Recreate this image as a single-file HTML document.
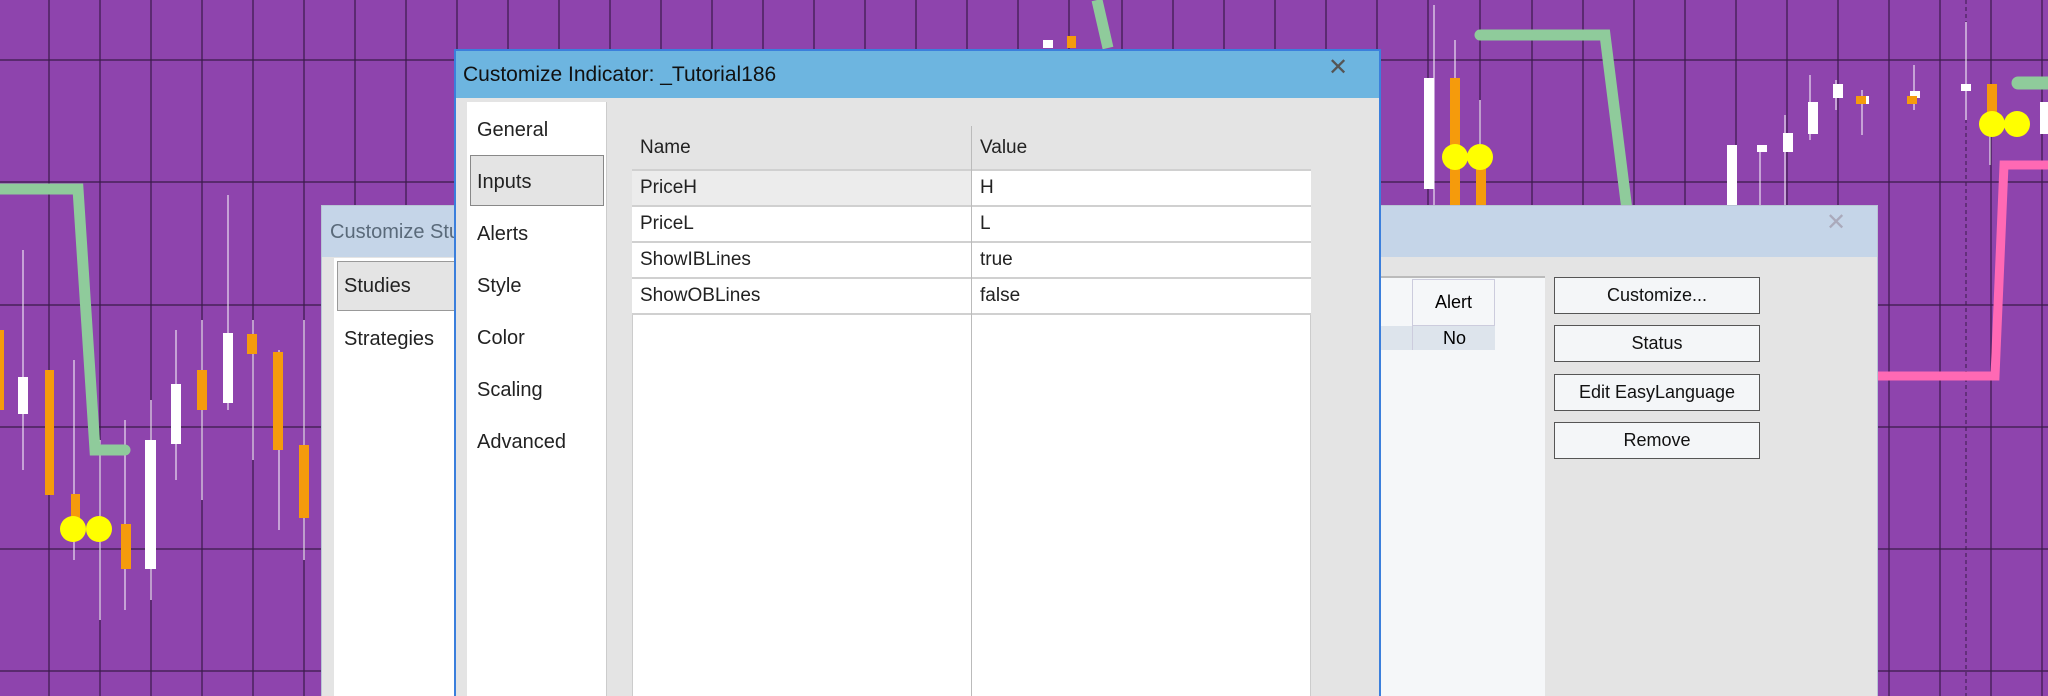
<!DOCTYPE html>
<html style="overflow:hidden;height:696px"><head><meta charset="utf-8"><style>
html,body{margin:0;padding:0}
#w{width:2048px;height:696px;overflow:hidden;background:#8e44ad;font-family:"Liberation Sans",sans-serif;position:relative}
.abs{position:absolute}
.t{font-size:20px;color:#222;position:absolute}
.btn{position:absolute;left:1554px;width:206px;height:37px;border:1px solid #555;background:#f4f6f8;box-sizing:border-box;text-align:center;line-height:35px;font-size:18px;color:#111}
.row{position:absolute;left:632px;width:679px;height:36px;border-bottom:2px solid #d0d0d0;box-sizing:border-box;font-size:19px;line-height:34px;color:#222}
.row span{position:absolute}
</style></head><body><div id="w">
<svg class="abs" style="left:0;top:0" width="2048" height="696">
<g stroke="#3a1a4a" stroke-width="1.2">
<line x1="49" y1="0" x2="49" y2="696"/><line x1="100" y1="0" x2="100" y2="696"/><line x1="151" y1="0" x2="151" y2="696"/><line x1="202" y1="0" x2="202" y2="696"/><line x1="253" y1="0" x2="253" y2="696"/><line x1="304" y1="0" x2="304" y2="696"/><line x1="355" y1="0" x2="355" y2="696"/><line x1="406" y1="0" x2="406" y2="696"/><line x1="457" y1="0" x2="457" y2="696"/><line x1="508" y1="0" x2="508" y2="696"/><line x1="559" y1="0" x2="559" y2="696"/><line x1="610" y1="0" x2="610" y2="696"/><line x1="661" y1="0" x2="661" y2="696"/><line x1="712" y1="0" x2="712" y2="696"/><line x1="763" y1="0" x2="763" y2="696"/><line x1="814" y1="0" x2="814" y2="696"/><line x1="865" y1="0" x2="865" y2="696"/><line x1="916" y1="0" x2="916" y2="696"/><line x1="967" y1="0" x2="967" y2="696"/><line x1="1018" y1="0" x2="1018" y2="696"/><line x1="1069" y1="0" x2="1069" y2="696"/><line x1="1122" y1="0" x2="1122" y2="696"/><line x1="1173" y1="0" x2="1173" y2="696"/><line x1="1224" y1="0" x2="1224" y2="696"/><line x1="1275" y1="0" x2="1275" y2="696"/><line x1="1326" y1="0" x2="1326" y2="696"/><line x1="1377" y1="0" x2="1377" y2="696"/><line x1="1428" y1="0" x2="1428" y2="696"/><line x1="1480" y1="0" x2="1480" y2="696"/><line x1="1532" y1="0" x2="1532" y2="696"/><line x1="1583" y1="0" x2="1583" y2="696"/><line x1="1634" y1="0" x2="1634" y2="696"/><line x1="1685" y1="0" x2="1685" y2="696"/><line x1="1736" y1="0" x2="1736" y2="696"/><line x1="1787" y1="0" x2="1787" y2="696"/><line x1="1838" y1="0" x2="1838" y2="696"/><line x1="1889" y1="0" x2="1889" y2="696"/><line x1="1940" y1="0" x2="1940" y2="696"/><line x1="1991" y1="0" x2="1991" y2="696"/><line x1="2042" y1="0" x2="2042" y2="696"/>
<line x1="0" y1="60" x2="2048" y2="60"/><line x1="0" y1="182" x2="2048" y2="182"/><line x1="0" y1="305" x2="2048" y2="305"/><line x1="0" y1="427" x2="2048" y2="427"/><line x1="0" y1="549" x2="2048" y2="549"/><line x1="0" y1="671" x2="2048" y2="671"/>
</g>
<line x1="1966" y1="0" x2="1966" y2="696" stroke="#3a1a4a" stroke-dasharray="4,3"/>
<g stroke="#fff" stroke-width="1">
<line x1="23" y1="250" x2="23" y2="470"/><line x1="74" y1="360" x2="74" y2="560"/><line x1="100" y1="440" x2="100" y2="620"/><line x1="125" y1="420" x2="125" y2="610"/><line x1="151" y1="400" x2="151" y2="600"/><line x1="176" y1="330" x2="176" y2="480"/><line x1="202" y1="320" x2="202" y2="500"/><line x1="228" y1="195" x2="228" y2="410"/><line x1="253" y1="320" x2="253" y2="460"/><line x1="279" y1="350" x2="279" y2="530"/><line x1="304" y1="320" x2="304" y2="560"/>
<line x1="1434" y1="5" x2="1434" y2="220"/><line x1="1455" y1="40" x2="1455" y2="220"/><line x1="1480" y1="100" x2="1480" y2="220"/><line x1="1760" y1="150" x2="1760" y2="210"/><line x1="1785" y1="115" x2="1785" y2="220"/><line x1="1810" y1="75" x2="1810" y2="140"/><line x1="1836" y1="80" x2="1836" y2="110"/><line x1="1862" y1="90" x2="1862" y2="135"/><line x1="1914" y1="65" x2="1914" y2="110"/><line x1="1966" y1="22" x2="1966" y2="120"/><line x1="1990" y1="100" x2="1990" y2="165"/>
</g>
<g fill="#fff">
<rect x="18" y="377" width="10" height="37"/><rect x="145" y="440" width="11" height="129"/><rect x="171" y="384" width="10" height="60"/><rect x="223" y="333" width="10" height="70"/><rect x="1424" y="78" width="10" height="111"/><rect x="1727" y="145" width="10" height="60"/><rect x="1757" y="145" width="10" height="7"/><rect x="1783" y="133" width="10" height="19"/><rect x="1808" y="102" width="10" height="32"/><rect x="1833" y="84" width="10" height="14"/><rect x="1859" y="96" width="10" height="8"/><rect x="1910" y="91" width="10" height="7"/><rect x="1961" y="84" width="10" height="7"/><rect x="2040" y="102" width="10" height="32"/><rect x="1043" y="40" width="10" height="8"/>
</g>
<g fill="#f59b0c">
<rect x="0" y="330" width="4" height="80"/><rect x="45" y="370" width="9" height="125"/><rect x="71" y="494" width="9" height="35"/><rect x="121" y="524" width="10" height="45"/><rect x="197" y="370" width="10" height="40"/><rect x="247" y="334" width="10" height="20"/><rect x="273" y="352" width="10" height="98"/><rect x="299" y="445" width="10" height="73"/><rect x="1450" y="78" width="10" height="130"/><rect x="1476" y="160" width="10" height="45"/><rect x="1856" y="96" width="10" height="8"/><rect x="1907" y="96" width="10" height="8"/><rect x="1987" y="84" width="10" height="40"/><rect x="1067" y="36" width="9" height="12"/>
</g>
<polyline points="0,189 78,189 95,450 125,450" fill="none" stroke="#8fcb9b" stroke-width="11" stroke-linecap="round"/>
<polyline points="1097,0 1108,48" fill="none" stroke="#8fcb9b" stroke-width="11"/>
<polyline points="1480,35 1605,35 1627,210" fill="none" stroke="#8fcb9b" stroke-width="11" stroke-linecap="round"/>
<line x1="2018" y1="83" x2="2048" y2="83" stroke="#8fcb9b" stroke-width="13" stroke-linecap="round"/>
<polyline points="1878,376 1995,376 2004,165 2048,165" fill="none" stroke="#ff69b4" stroke-width="9"/>
<g fill="#ffff00">
<ellipse cx="73" cy="529" rx="13" ry="13"/><ellipse cx="99" cy="529" rx="13" ry="13"/><ellipse cx="1455" cy="157" rx="13" ry="13"/><ellipse cx="1480" cy="157" rx="13" ry="13"/><ellipse cx="1992" cy="124" rx="13" ry="13"/><ellipse cx="2017" cy="124" rx="13" ry="13"/>
</g>
</svg>

<!-- back dialog -->
<div class="abs" style="left:321px;top:205px;width:1557px;height:491px;background:#e4e4e4;border:1px solid #b8c4d4;border-bottom:none;box-sizing:border-box"></div>
<div class="abs" style="left:322px;top:206px;width:1555px;height:51px;background:#c5d5e8"></div>
<div class="t" style="left:330px;top:221px;color:#5a6a7a">Customize Studies</div>
<div class="abs" style="left:1826px;top:208px;font-size:24px;color:#aab">✕</div>
<div class="abs" style="left:334px;top:258px;width:130px;height:438px;background:#fff"></div>
<div class="abs" style="left:337px;top:261px;width:130px;height:50px;background:#e4e4e4;border:1px solid #999;box-sizing:border-box"></div>
<div class="t" style="left:344px;top:275px">Studies</div>
<div class="t" style="left:344px;top:328px">Strategies</div>
<div class="abs" style="left:1381px;top:276px;width:164px;height:420px;background:#f5f7f9;border-top:2px solid #bbb;box-sizing:border-box"></div>
<div class="abs" style="left:1412px;top:279px;width:83px;height:47px;border:1px solid #ccd;background:#f5f7f9;box-sizing:border-box;text-align:center;line-height:45px;font-size:18px">Alert</div>
<div class="abs" style="left:1381px;top:326px;width:114px;height:24px;background:#dde4ec"></div>
<div class="abs" style="left:1412px;top:326px;width:83px;height:24px;border-left:1px solid #ccd;text-align:center;line-height:24px;font-size:18px">No</div>
<div class="btn" style="top:277px">Customize...</div>
<div class="btn" style="top:325px">Status</div>
<div class="btn" style="top:374px">Edit EasyLanguage</div>
<div class="btn" style="top:422px">Remove</div>

<!-- front dialog -->
<div class="abs" style="left:454px;top:49px;width:927px;height:647px;background:#e4e4e4;border:2px solid #3b7fdc;border-bottom:none;box-sizing:border-box"></div>
<div class="abs" style="left:456px;top:51px;width:923px;height:47px;background:#6db5e0"></div>
<div class="t" style="left:463px;top:63px;font-size:21px;color:#111">Customize Indicator: _Tutorial186</div>
<div class="abs" style="left:1328px;top:53px;font-size:24px;color:#555">✕</div>
<div class="abs" style="left:467px;top:102px;width:140px;height:594px;background:#fff;border-right:1px solid #ccc;box-sizing:border-box"></div>
<div class="abs" style="left:470px;top:155px;width:134px;height:51px;background:#e4e4e4;border:1px solid #888;box-sizing:border-box"></div>
<div class="t" style="left:477px;top:119px">General</div>
<div class="t" style="left:477px;top:171px">Inputs</div>
<div class="t" style="left:477px;top:223px">Alerts</div>
<div class="t" style="left:477px;top:275px">Style</div>
<div class="t" style="left:477px;top:327px">Color</div>
<div class="t" style="left:477px;top:379px">Scaling</div>
<div class="t" style="left:477px;top:431px">Advanced</div>
<div class="abs" style="left:632px;top:126px;width:679px;height:570px;background:#fff;border:1px solid #ccc;border-bottom:none;box-sizing:border-box"></div>
<div class="row" style="top:126px;height:45px;background:#e4e4e4;line-height:43px"><span style="left:8px">Name</span><span style="left:348px">Value</span></div>
<div class="row" style="top:171px;background:#ececec"><span style="left:8px">PriceH</span><span style="left:348px;background:#fff;width:331px;height:34px;padding-left:8px;margin-left:-8px">H</span></div>
<div class="row" style="top:207px;background:#fff"><span style="left:8px">PriceL</span><span style="left:348px">L</span></div>
<div class="row" style="top:243px;background:#fff"><span style="left:8px">ShowIBLines</span><span style="left:348px">true</span></div>
<div class="row" style="top:279px;background:#fff"><span style="left:8px">ShowOBLines</span><span style="left:348px">false</span></div>
<div class="abs" style="left:971px;top:126px;width:1px;height:570px;background:#bbb"></div>
</div></body></html>
